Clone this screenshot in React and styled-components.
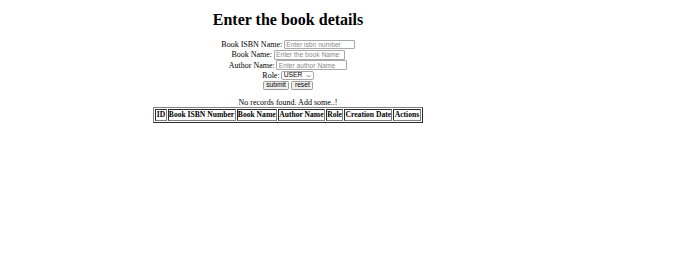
import React, { useState } from 'react';
import styled, { createGlobalStyle } from 'styled-components';

const GlobalStyle = createGlobalStyle`
    body {
        margin: 8px;
        background: #fff;
        color: #000;
        font-family: "Liberation Serif", "Times New Roman", serif;
        font-size: 8px;
    }
`;

const Page = styled.div`
    width: 560px;
    display: flex;
    flex-direction: column;
    align-items: center;
`;

const Title = styled.h1`
    font-size: 16px;
    font-weight: bold;
    margin: 3px 0 10.5px;
    line-height: 18px;
`;

const Form = styled.form`
    display: flex;
    flex-direction: column;
    align-items: center;
`;

const Row = styled.div`
    display: flex;
    justify-content: center;
    align-items: center;
    gap: ${props => props.gap || 1.5}px;
    height: 10.25px;
`;

const Input = styled.input`
    box-sizing: border-box;
    width: 71px;
    height: 9.5px;
    padding: 0 1.5px;
    font-family: "Liberation Sans", Arial, sans-serif;
    font-size: 6.7px;
    border: 1px solid #a8a8a8;
    border-radius: 1px;
    outline: none;
    &::placeholder {
        color: #8a8a8a;
    }
`;

const SelectWrap = styled.span`
    position: relative;
    display: inline-flex;
`;

const Select = styled.select`
    box-sizing: border-box;
    appearance: none;
    height: 9.5px;
    width: 33px;
    padding: 0 0 0 2px;
    font-family: "Liberation Sans", Arial, sans-serif;
    font-size: 6.7px;
    line-height: 1;
    border: 1px solid #a8a8a8;
    border-radius: 2px;
    background: #fff;
    color: #000;
    outline: none;
`;

const Chevron = styled.svg`
    position: absolute;
    right: 3px;
    top: 3px;
    width: 5px;
    height: 4px;
    pointer-events: none;
`;

const Button = styled.button`
    box-sizing: border-box;
    height: 9.5px;
    padding: 0 2.5px;
    font-family: "Liberation Sans", Arial, sans-serif;
    font-size: 6.7px;
    line-height: 1;
    border: 1px solid #9a9a9a;
    border-radius: 1.5px;
    background: #efefef;
    color: #000;
`;

const Message = styled.div`
    margin-top: 7.5px;
    line-height: 9px;
`;

const Table = styled.table`
    border: 1px outset #808080;
    border-spacing: 1px;
    margin-top: -0.5px;
    th {
        border: 1px inset #808080;
        padding: 0.5px 0.3px;
        font-weight: bold;
        font-size: 7.6px;
        line-height: 9px;
        white-space: nowrap;
    }
`;

export default function App() {
    const [isbn, setIsbn] = useState('');
    const [name, setName] = useState('');
    const [author, setAuthor] = useState('');
    const [role, setRole] = useState('USER');

    const reset = () => {
        setIsbn('');
        setName('');
        setAuthor('');
        setRole('USER');
    };

    return (
        <>
            <GlobalStyle />
            <Page>
                <Title>Enter the book details</Title>
                <Form onSubmit={e => e.preventDefault()}>
                    <Row>
                        <label>Book ISBN Name:</label>
                        <Input placeholder="Enter isbn number" value={isbn} onChange={e => setIsbn(e.target.value)} />
                    </Row>
                    <Row>
                        <label>Book Name:</label>
                        <Input placeholder="Enter the book Name" value={name} onChange={e => setName(e.target.value)} />
                    </Row>
                    <Row>
                        <label>Author Name:</label>
                        <Input placeholder="Enter author Name" value={author} onChange={e => setAuthor(e.target.value)} />
                    </Row>
                    <Row gap={1}>
                        <label>Role:</label>
                        <SelectWrap>
                            <Select value={role} onChange={e => setRole(e.target.value)}>
                                <option>USER</option>
                                <option>ADMIN</option>
                            </Select>
                            <Chevron viewBox="0 0 10 8">
                                <path d="M1 2 L5 6 L9 2" fill="none" stroke="#555" strokeWidth="1.4" />
                            </Chevron>
                        </SelectWrap>
                    </Row>
                    <Row gap={2}>
                        <Button type="submit">submit</Button>
                        <Button type="button" onClick={reset}>reset</Button>
                    </Row>
                </Form>
                <Message>No records found. Add some..!</Message>
                <Table>
                    <thead>
                        <tr>
                            <th>ID</th>
                            <th>Book ISBN Number</th>
                            <th>Book Name</th>
                            <th>Author Name</th>
                            <th>Role</th>
                            <th>Creation Date</th>
                            <th>Actions</th>
                        </tr>
                    </thead>
                </Table>
            </Page>
        </>
    );
}
